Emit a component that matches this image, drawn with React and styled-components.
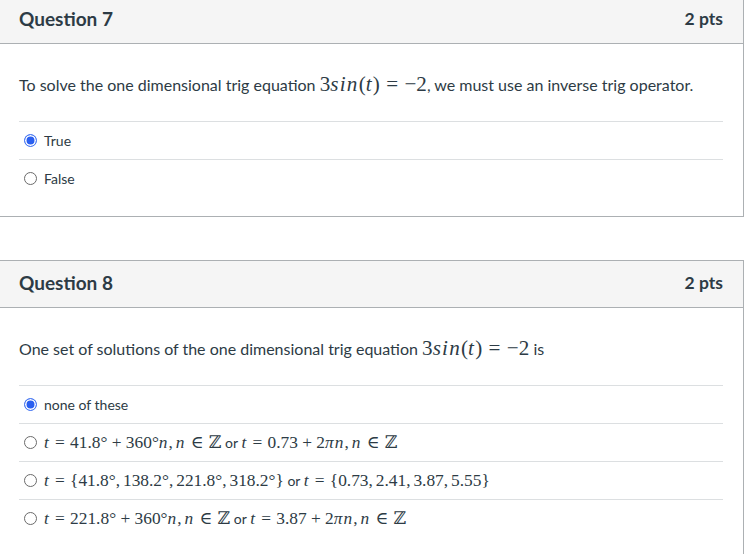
import React from "react";
import styled, { createGlobalStyle } from "styled-components";

const GlobalStyle = createGlobalStyle`
  body {
    margin: 0;
    background: #fff;
    color: #2d3b45;
    font-family: Lato, "Open Sans", sans-serif;
    overflow: hidden;
  }
`;

const Page = styled.div`
  display: flex;
  flex-direction: column;
  gap: 43px;
  margin: -4px 0 0 -1px;
  width: 745px;
`;

const Card = styled.section`
  border: 1px solid #acb0b3;
  background: #fff;
`;

const Header = styled.div`
  height: 47px;
  box-sizing: border-box;
  display: flex;
  align-items: center;
  justify-content: space-between;
  padding: 0 20px 4px 19px;
  background: #f5f5f5;
  border-bottom: 1px solid #acb0b3;
`;

const Title = styled.h2`
  margin: 0;
  font-size: 19px;
  font-weight: 700;
  color: #2d3b45;
`;

const Points = styled.span`
  font-size: 17.5px;
  font-weight: 700;
  color: #2d3b45;
`;

const Body = styled.div`
  padding: 30px 20px 19px 19px;
`;

const Prompt = styled.p`
  margin: 0 0 25px;
  font-size: 16px;
  line-height: 22px;
`;

const Answers = styled.ul`
  list-style: none;
  margin: 0;
  padding: 0;
`;

const Answer = styled.li`
  height: 38px;
  box-sizing: border-box;
  display: flex;
  align-items: center;
  gap: 7px;
  padding-left: 5px;
  border-top: 1px solid #dcdfe1;
  font-size: 14px;
`;

const Radio = styled.span`
  flex: none;
  width: 13px;
  height: 13px;
  box-sizing: border-box;
  border-radius: 50%;
  border: ${(p) => (p.$checked ? "1.5px solid #4a7af2" : "1px solid #6b6b6b")};
  background: ${(p) => (p.$checked ? "#2a5ff0" : "#fff")};
  box-shadow: ${(p) => (p.$checked ? "inset 0 0 0 1.5px #fff" : "none")};
`;

const AnswerLabel = styled.span`
  line-height: 20px;
  white-space: nowrap;
`;

const Formula = styled.span`
  font-family: "Liberation Serif", "DejaVu Serif", serif;
  font-size: ${(p) => p.$size || "1.24em"};
  line-height: 1;
  white-space: nowrap;
`;

const I = styled.i`
  font-style: italic;
  letter-spacing: 0.06em;
`;

const Rel = styled.span`
  margin: 0 0.3em;
`;

const Bin = styled.span`
  margin: 0 0.25em;
`;

const Thin = styled.span`
  display: inline-block;
  width: 0.1667em;
`;

const equation = (
  <Formula $size="1.32em">
    3<I>sin</I>(<I>t</I>)<Rel>=</Rel>−2
  </Formula>
);

const questions = [
  {
    id: 7,
    points: "2 pts",
    text: (
      <>
        To solve the one dimensional trig equation {equation}, we must use an
        inverse trig operator.
      </>
    ),
    answers: [
      { key: "t", checked: true, label: "True" },
      { key: "f", checked: false, label: "False" },
    ],
  },
  {
    id: 8,
    points: "2 pts",
    text: <>One set of solutions of the one dimensional trig equation {equation} is</>,
    answers: [
      { key: "a", checked: true, label: "none of these" },
      {
        key: "b",
        checked: false,
        label: (
          <>
            <Formula>
              <I>t</I>
              <Rel>=</Rel>41.8°<Bin>+</Bin>360°<I>n</I>,<Thin />
              <I>n</I>
              <Rel>∈</Rel>ℤ
            </Formula>{" "}
            or{" "}
            <Formula>
              <I>t</I>
              <Rel>=</Rel>0.73<Bin>+</Bin>2<I>πn</I>,<Thin />
              <I>n</I>
              <Rel>∈</Rel>ℤ
            </Formula>
          </>
        ),
      },
      {
        key: "c",
        checked: false,
        label: (
          <>
            <Formula>
              <I>t</I>
              <Rel>=</Rel>
              {"{"}41.8°,<Thin />138.2°,<Thin />221.8°,<Thin />318.2°{"}"}
            </Formula>{" "}
            or{" "}
            <Formula>
              <I>t</I>
              <Rel>=</Rel>
              {"{"}0.73,<Thin />2.41,<Thin />3.87,<Thin />5.55{"}"}
            </Formula>
          </>
        ),
      },
      {
        key: "d",
        checked: false,
        label: (
          <>
            <Formula>
              <I>t</I>
              <Rel>=</Rel>221.8°<Bin>+</Bin>360°<I>n</I>,<Thin />
              <I>n</I>
              <Rel>∈</Rel>ℤ
            </Formula>{" "}
            or{" "}
            <Formula>
              <I>t</I>
              <Rel>=</Rel>3.87<Bin>+</Bin>2<I>πn</I>,<Thin />
              <I>n</I>
              <Rel>∈</Rel>ℤ
            </Formula>
          </>
        ),
      },
    ],
  },
];

export default function App() {
  return (
    <>
      <GlobalStyle />
      <Page>
        {questions.map((q) => (
          <Card key={q.id}>
            <Header>
              <Title>Question {q.id}</Title>
              <Points>{q.points}</Points>
            </Header>
            <Body>
              <Prompt>{q.text}</Prompt>
              <Answers>
                {q.answers.map((a) => (
                  <Answer key={a.key}>
                    <Radio $checked={a.checked} />
                    <AnswerLabel>{a.label}</AnswerLabel>
                  </Answer>
                ))}
              </Answers>
            </Body>
          </Card>
        ))}
      </Page>
    </>
  );
}
